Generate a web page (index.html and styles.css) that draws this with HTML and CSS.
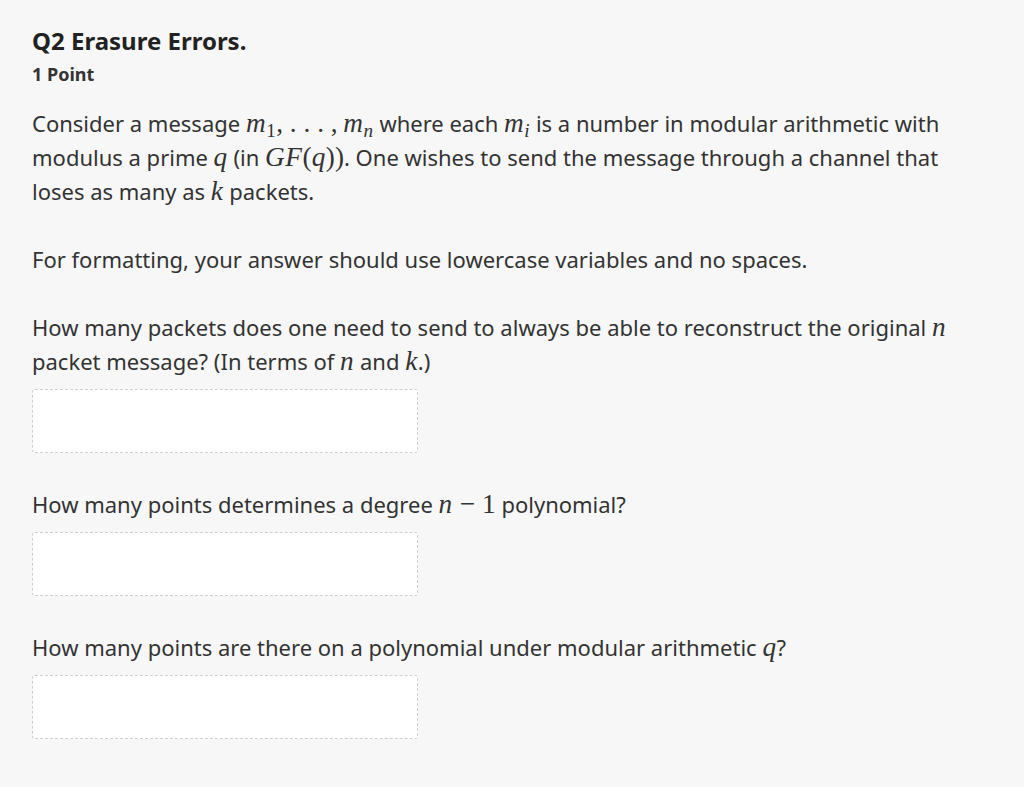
FILE: index.html
```html
<!DOCTYPE html>
<html>
<head>
<meta charset="utf-8">
<link rel="stylesheet" href="styles.css">
</head>
<body>
<main class="question">
  <header class="q-head">
    <h1 class="q-title">Q2 Erasure Errors.</h1>
    <div class="q-points">1 Point</div>
  </header>
  <div class="q-body">
    <p>Consider a message <span class="m">m<sub class="ms">1</sub></span><span class="mr">, . . . ,</span> <span class="m">m<sub class="ms ms-i">n</sub></span> where each <span class="m">m<sub class="ms ms-i">i</sub></span> is a number in modular arithmetic with modulus a prime <span class="m">q</span> (in <span class="m">GF</span><span class="mr">(</span><span class="m">q</span><span class="mr">))</span>. One wishes to send the message through a channel that loses as many as <span class="m">k</span> packets.</p>
    <p>For formatting, your answer should use lowercase variables and no spaces.</p>
    <div class="part">
      <p>How many packets does one need to send to always be able to reconstruct the original <span class="m">n</span> packet message? (In terms of <span class="m">n</span> and <span class="m">k</span>.)</p>
      <div class="answer"></div>
    </div>
    <div class="part">
      <p>How many points determines a degree <span class="m">n</span> <span class="mr"><span class="op">&minus;</span>1</span> polynomial?</p>
      <div class="answer"></div>
    </div>
    <div class="part">
      <p>How many points are there on a polynomial under modular arithmetic <span class="m">q</span>?</p>
      <div class="answer"></div>
    </div>
  </div>
</main>
</body>
</html>
```

FILE: styles.css
```css
html, body {
  margin: 0;
  padding: 0;
  background: #f7f7f7;
}
body {
  font-family: "Noto Sans", "Open Sans", sans-serif;
  color: #333;
}
.question {
  padding: 22px 32px 40px 32px;
  width: 930px;
}
.q-head {
  display: flex;
  flex-direction: column;
  gap: 2px;
}
.q-title {
  margin: 0;
  font-size: 24px;
  font-weight: 700;
  line-height: 38px;
  color: #222;
}
.q-points {
  font-size: 18px;
  font-weight: 700;
  line-height: 24px;
  color: #333;
}
.q-body {
  margin-top: 20px;
  font-size: 22px;
  line-height: 34px;
  display: flex;
  flex-direction: column;
  gap: 34px;
}
.q-body p {
  margin: 0;
}
.part {
  display: flex;
  flex-direction: column;
  gap: 11px;
}
.m {
  font-family: "Liberation Serif", "DejaVu Serif", serif;
  font-style: italic;
  font-size: 1.24em;
  line-height: 0;
  letter-spacing: 0.02em;
}
.mr {
  font-family: "Liberation Serif", "DejaVu Serif", serif;
  font-size: 1.24em;
  line-height: 0;
}
.op {
  margin: 0 0.25em 0 0.05em;
}
.ms {
  font-style: normal;
  font-size: 0.7em;
  line-height: 0;
  vertical-align: -0.25em;
}
.ms-i {
  font-style: italic;
}
.answer {
  width: 384px;
  height: 62px;
  background: #fff;
  border: 1px dashed #cfcfcf;
  border-radius: 3px;
}
```
